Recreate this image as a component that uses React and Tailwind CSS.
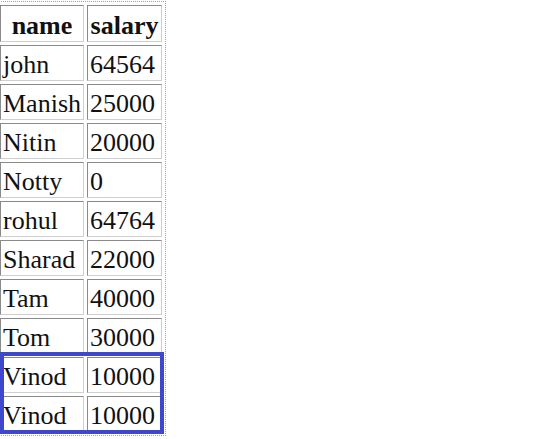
import React from 'react';

const rows = [
    ['john', '64564'],
    ['Manish', '25000'],
    ['Nitin', '20000'],
    ['Notty', '0'],
    ['rohul', '64764'],
    ['Sharad', '22000'],
    ['Tam', '40000'],
    ['Tom', '30000'],
    ['Vinod', '10000'],
    ['Vinod', '10000'],
];

const cell = 'px-[2px] pt-[4px] pb-0 border border-t-[#8a8a8a] border-l-[#8a8a8a] border-r-[#d0d0d0] border-b-[#d0d0d0] leading-none';

export default function App() {
    return (
        <div className="w-[550px] h-[439px] bg-white pt-[1px]" style={{ fontFamily: '"Liberation Serif", "Times New Roman", serif' }}>
            <div className="relative w-fit">
                <table className="border-separate border-spacing-[3px] border-t border-r border-b border-dotted border-[#9a9ade] -ml-[3px] text-[26px] text-[#111]">
                    <thead>
                        <tr>
                            <th className={`${cell} h-[37px] w-[83px] text-center font-bold`}>name</th>
                            <th className={`${cell} h-[37px] w-[75px] text-center font-bold`}>salary</th>
                        </tr>
                    </thead>
                    <tbody>
                        {rows.map(([name, salary], i) => (
                            <tr key={i}>
                                <td className={`${cell} h-[36px] text-left`}>{name}</td>
                                <td className={`${cell} h-[36px] text-left`}>{salary}</td>
                            </tr>
                        ))}
                    </tbody>
                </table>
                {/* highlight box around the duplicated rows */}
                <div className="absolute left-0 top-[351px] w-[164px] h-[82px] border-4 border-[#3f48cc] pointer-events-none" />
            </div>
        </div>
    );
}
